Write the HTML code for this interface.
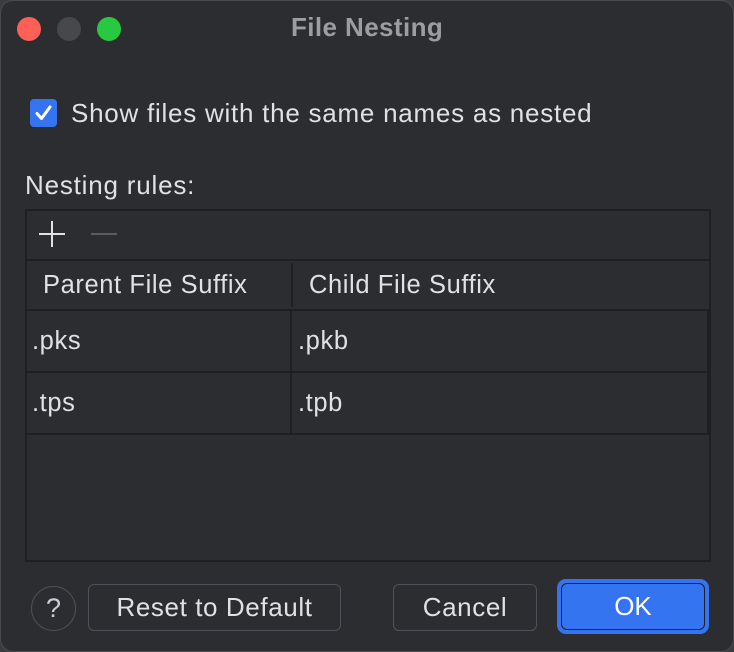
<!DOCTYPE html>
<html><head><meta charset="utf-8"><style>
*{margin:0;padding:0;box-sizing:border-box}
html,body{width:734px;height:652px;background:#3b3c3e;overflow:hidden}
body{font-family:"Liberation Sans",sans-serif;color:#dfe1e5;position:relative}
.win{position:absolute;left:0;top:0;width:734px;height:652px;background:#2b2d30;border-radius:13px;border:1px solid #4a4b4e}
.a{position:absolute}
.dot{position:absolute;width:24px;height:24px;border-radius:50%;top:16px}
.t{white-space:nowrap}
.btn{position:absolute;border:1.5px solid #4e5157;border-radius:6px;font-size:26px;letter-spacing:.6px;display:flex;align-items:center;justify-content:center;color:#dfe1e5}
.cell{position:absolute;font-size:25.5px;letter-spacing:.6px;display:flex;align-items:center;white-space:nowrap}
</style></head><body>
<div class="win">
<div class="dot" style="left:16px;background:#fe5f57"></div>
<div class="dot" style="left:56px;background:#46484c"></div>
<div class="dot" style="left:96px;background:#28c840"></div>
<div class="a t" style="left:290px;top:11px;font-size:26px;letter-spacing:.4px;font-weight:bold;color:#9b9da1">File Nesting</div>

<div class="a" style="left:29px;top:98px;width:27px;height:28px;background:#3574f0;border-radius:4px">
<svg width="27" height="28" viewBox="0 0 27 28"><path d="M7 14.5 L11.5 19.5 L20 8" stroke="#fff" stroke-width="3" fill="none" stroke-linecap="round" stroke-linejoin="round"/></svg></div>
<div class="a t" style="left:70px;top:97px;font-size:26px;letter-spacing:.75px;line-height:30px">Show files with the same names as nested</div>
<div class="a t" style="left:24px;top:169px;font-size:26px;letter-spacing:.8px;line-height:30px">Nesting rules:</div>

<div class="a" style="left:24px;top:208px;width:686px;height:353px;border:2px solid #1e1f22;background:#2b2d30"></div>
<div class="a" style="left:38px;top:232px;width:26px;height:2px;background:#dfe1e5"></div>
<div class="a" style="left:50px;top:220px;width:2px;height:26px;background:#dfe1e5"></div>
<div class="a" style="left:90px;top:232px;width:26px;height:2px;background:#5a5c60"></div>
<div class="a" style="left:25px;top:258px;width:684px;height:2px;background:#1e1f22"></div>
<div class="a" style="left:290px;top:262px;width:2px;height:44px;background:#1e1f22"></div>
<div class="a" style="left:25px;top:308px;width:684px;height:2px;background:#1e1f22"></div>
<div class="a" style="left:25px;top:370px;width:684px;height:2px;background:#1e1f22"></div>
<div class="a" style="left:25px;top:432px;width:684px;height:2px;background:#1e1f22"></div>
<div class="a" style="left:289px;top:310px;width:2px;height:122px;background:#1e1f22"></div>
<div class="a" style="left:706px;top:310px;width:2px;height:122px;background:#1e1f22"></div>
<div class="cell" style="left:42px;top:260px;height:48px">Parent File Suffix</div>
<div class="cell" style="left:308px;top:260px;height:48px">Child File Suffix</div>
<div class="cell" style="left:31px;top:310px;height:60px">.pks</div>
<div class="cell" style="left:297px;top:310px;height:60px">.pkb</div>
<div class="cell" style="left:31px;top:372px;height:60px">.tps</div>
<div class="cell" style="left:297px;top:372px;height:60px">.tpb</div>

<div class="a" style="left:30px;top:585px;width:45px;height:45px;border:1.5px solid #4e5157;border-radius:50%;font-size:27px;display:flex;align-items:center;justify-content:center;color:#c9ccd1">?</div>
<div class="btn" style="left:87px;top:583px;width:253px;height:47px">Reset to Default</div>
<div class="btn" style="left:392px;top:583px;width:144px;height:47px">Cancel</div>
<div class="a" style="left:556px;top:578px;width:152px;height:55px;background:#3574f0;border-radius:9px"></div>
<div class="a" style="left:560px;top:582px;width:144px;height:47px;background:#3574f0;border:1.5px solid #1e1f22;border-radius:6px;font-size:26px;display:flex;align-items:center;justify-content:center;color:#fff">OK</div>
</div>
</body></html>
